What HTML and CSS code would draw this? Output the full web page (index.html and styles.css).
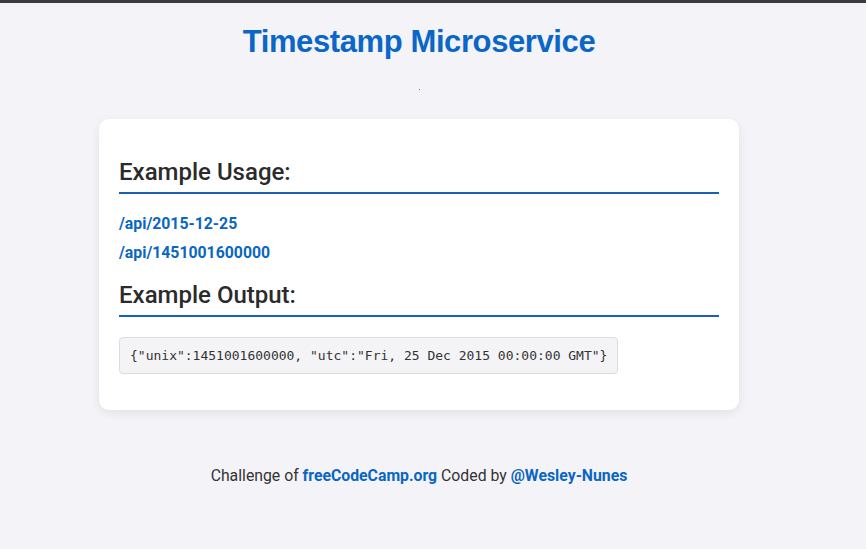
FILE: index.html
```html
<!DOCTYPE html>
<html lang="en">
<head>
  <meta charset="UTF-8" />
  <title>Timestamp Microservice</title>
  <link rel="stylesheet" href="styles.css">
</head>
<body>
  <div class="page">
    <!-- Page title -->
    <h1 class="title">Timestamp Microservice</h1>
    <div class="dot"></div>

    <!-- Main card -->
    <div class="card">
      <h2>Example Usage:</h2>
      <ul class="links">
        <li><a href="#">/api/2015-12-25</a></li>
        <li><a href="#">/api/1451001600000</a></li>
      </ul>
      <h2>Example Output:</h2>
      <code class="output">{"unix":1451001600000, "utc":"Fri, 25 Dec 2015 00:00:00 GMT"}</code>
    </div>

    <!-- Footer -->
    <p class="footer">Challenge of <a href="#">freeCodeCamp.org</a> Coded by <a href="#">@Wesley-Nunes</a></p>
  </div>
</body>
</html>
```

FILE: styles.css
```css
/* Reset */
html, body {
  margin: 0;
  padding: 0;
}

body {
  font-family: Roboto, "Liberation Sans", sans-serif;
  background-color: #f4f4f8;
  color: #333;
  border-top: 3px solid #3a3a3f;
  min-height: 546px;
}

a {
  color: #0a66c2;
  text-decoration: none;
  font-weight: 700;
}

/* Content column */
.page {
  width: 838px;
  text-align: center;
}

.title {
  margin: 21px 0 0;
  font-family: "Liberation Sans", Arial, sans-serif;
  font-size: 31px;
  font-weight: 700;
  color: #0a66c9;
  letter-spacing: -0.4px;
}

.dot {
  width: 1px;
  height: 1px;
  margin: 29px auto 29px;
  background: #777;
}

/* Card */
.card {
  width: 600px;
  margin: 0 auto;
  padding: 39px 20px 36px;
  background: #fff;
  border-radius: 10px;
  box-shadow: 0 3px 10px rgba(0, 0, 0, 0.08);
  text-align: left;
}

.card h2 {
  margin: 0;
  padding-bottom: 6px;
  font-size: 24px;
  font-weight: 500;
  color: #2b2b2b;
  border-bottom: 2px solid #1a62b0;
}

.links {
  list-style: none;
  margin: 15px 0 14px;
  padding: 0;
}

.links li {
  font-size: 15.8px;
  line-height: 29px;
}

.output {
  display: inline-block;
  margin-top: 20px;
  padding: 10px 10px;
  font-family: "DejaVu Sans Mono", monospace;
  font-size: 13px;
  color: #333;
  background: #f4f4f7;
  border: 1px solid #dcdce0;
  border-radius: 4px;
}

/* Footer */
.footer {
  margin: 56px 0 0;
  font-size: 15.8px;
  color: #333;
}
```
